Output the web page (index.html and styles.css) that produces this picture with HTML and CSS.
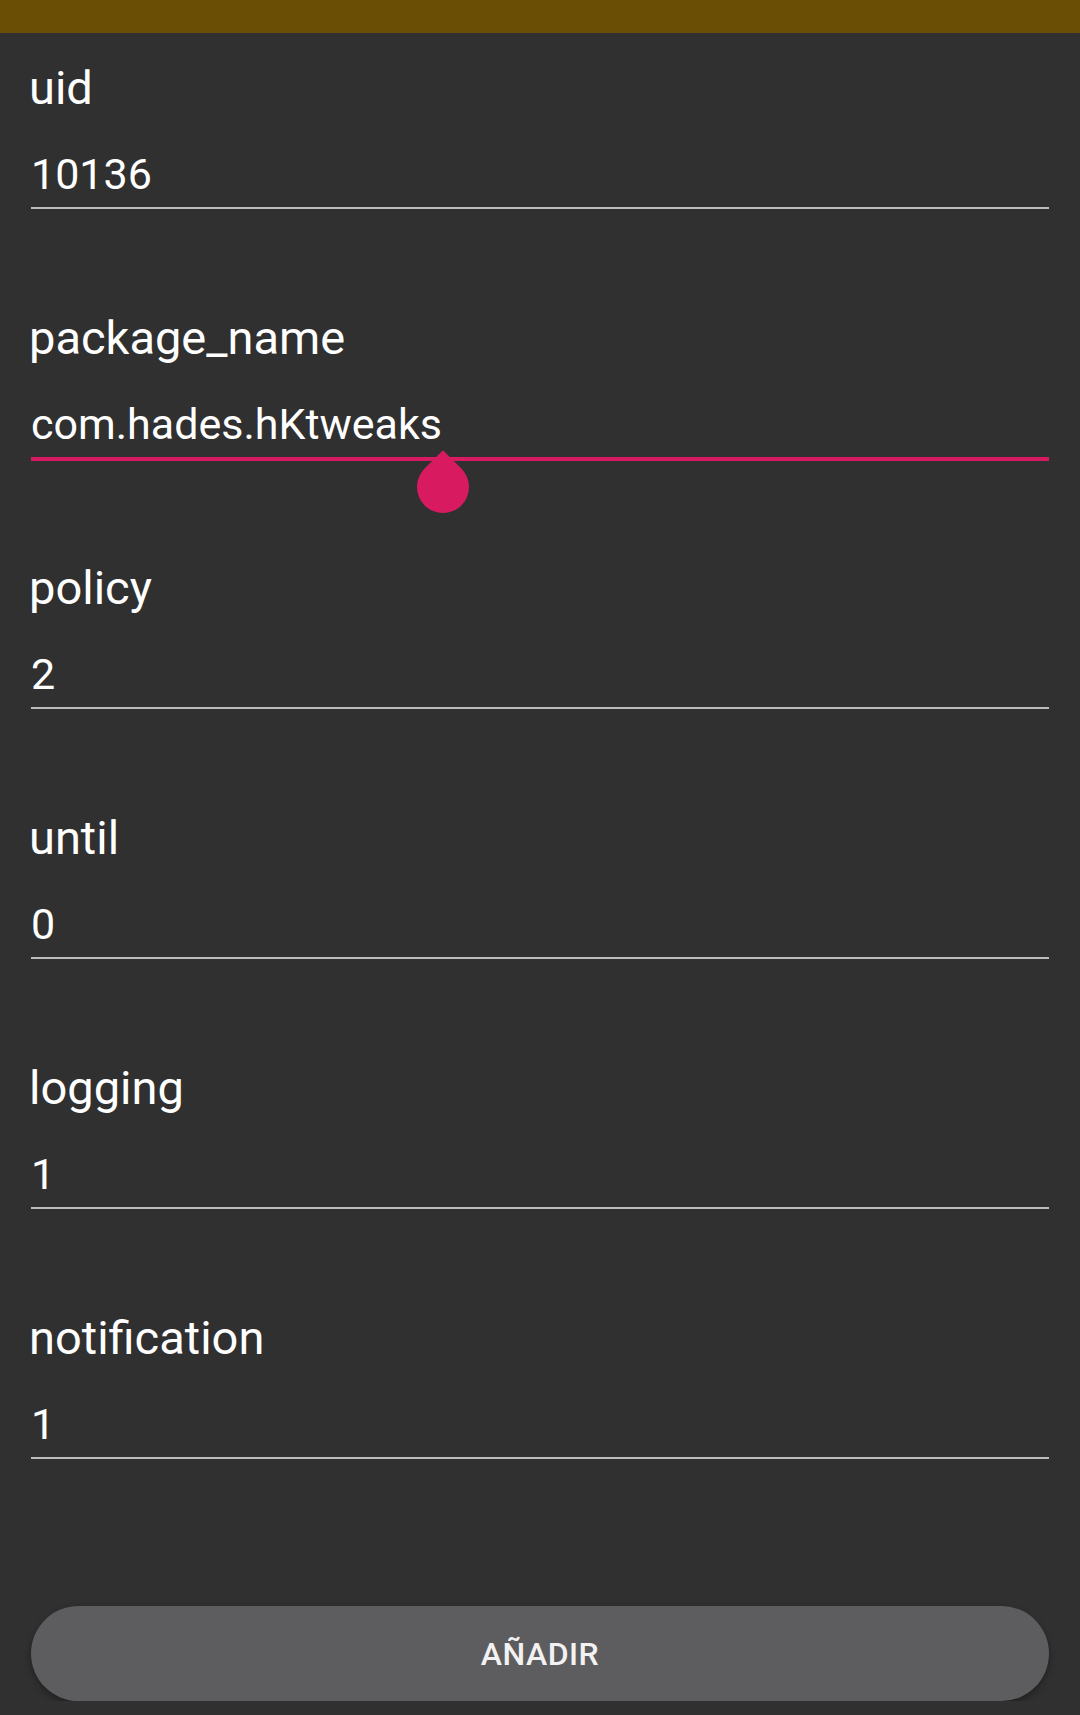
FILE: index.html
```html
<!DOCTYPE html>
<html lang="es">
<head>
<meta charset="UTF-8">
<meta name="viewport" content="width=device-width, initial-scale=1.0">
<title>Añadir regla</title>
<link rel="stylesheet" href="styles.css">
</head>
<body>

<div class="status-bar"></div>

<form class="container" id="ruleForm">
    <div class="field">
        <label for="uid">uid</label>
        <input type="text" id="uid" value="10136">
    </div>
    <div class="field">
        <label for="packageName">package_name</label>
        <input type="text" id="packageName" class="active" value="com.hades.hKtweaks">
        <span class="handle"></span>
    </div>
    <div class="field">
        <label for="policy">policy</label>
        <input type="text" id="policy" value="2">
    </div>
    <div class="field">
        <label for="until">until</label>
        <input type="text" id="until" value="0">
    </div>
    <div class="field">
        <label for="logging">logging</label>
        <input type="text" id="logging" value="1">
    </div>
    <div class="field">
        <label for="notification">notification</label>
        <input type="text" id="notification" value="1">
    </div>

    <button type="submit" class="add-button">Añadir</button>
</form>

</body>
</html>
```

FILE: styles.css
```css
body {
    font-family: Roboto, "Noto Sans", sans-serif;
    background-color: #303030;
    color: #ffffff;
    margin: 0;
    padding: 0;
}

.status-bar {
    height: 33px;
    background-color: #6b4e05;
}

.container {
    padding: 27px 31px 0;
}

.field {
    position: relative;
    height: 250px;
}

.field label {
    display: block;
    margin-left: -2px;
    font-size: 47px;
    line-height: 56px;
    height: 56px;
    margin-bottom: 28px;
}

.field input {
    display: block;
    width: 100%;
    box-sizing: border-box;
    height: 65px;
    padding: 0 0 3px;
    margin: 0;
    font-family: Roboto, "Noto Sans", sans-serif;
    font-size: 43px;
    color: #ffffff;
    background: transparent;
    border: none;
    border-bottom: 2px solid #bcbcbc;
    outline: none;
}

.field input.active {
    height: 67px;
    border-bottom: 4px solid #d81b60;
}

.handle {
    position: absolute;
    left: 386px;
    top: 151px;
    width: 52px;
    height: 52px;
    background-color: #d81b60;
    border-radius: 0 50% 50% 50%;
    transform: rotate(45deg);
}

.add-button {
    display: block;
    width: 100%;
    height: 95px;
    margin-top: 46px;
    border: none;
    border-radius: 48px;
    background-color: #5d5d5f;
    color: #f2f2f2;
    font-family: Roboto, "Noto Sans", sans-serif;
    font-size: 32px;
    font-weight: 500;
    letter-spacing: 0.5px;
    text-transform: uppercase;
    box-shadow: 0 3px 6px rgba(0, 0, 0, 0.35);
    cursor: pointer;
}
```
